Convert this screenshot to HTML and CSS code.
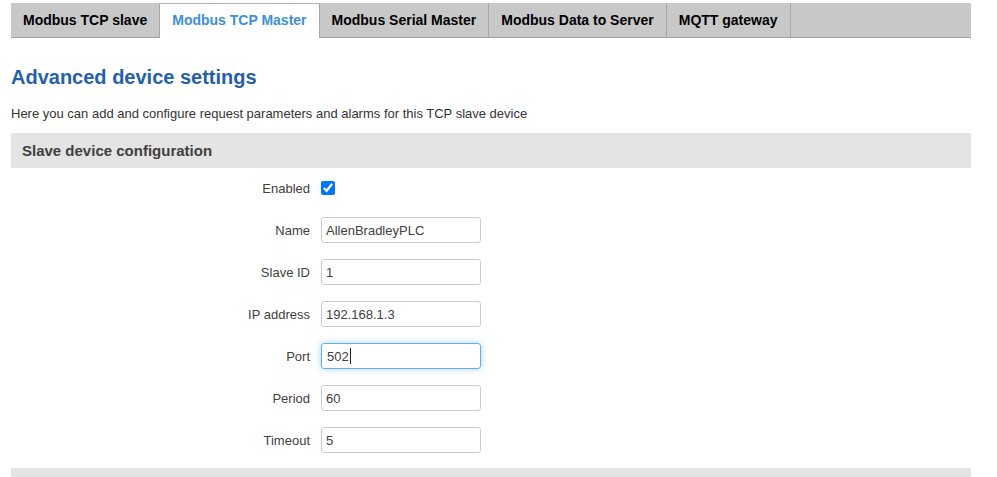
FILE: index.html
```html
<!DOCTYPE html>
<html>
    <head>
        <title>Advanced device settings</title>
        <link rel="stylesheet" href="styles.css">
    </head>
    <body>
        <div class="page">

            <ul class="tabs">
                <li class="tab">Modbus TCP slave</li>
                <li class="tab tab-active">Modbus TCP Master</li>
                <li class="tab">Modbus Serial Master</li>
                <li class="tab">Modbus Data to Server</li>
                <li class="tab">MQTT gateway</li>
            </ul>

            <h2 class="title">Advanced device settings</h2>

            <p class="description">
                Here you can add and configure request parameters and alarms for this TCP slave device
            </p>

            <div class="section">
                <h3 class="section-title">Slave device configuration</h3>

                <div class="form">
                    <div class="row">
                        <label class="label">Enabled</label>
                        <div class="field">
                            <input class="checkbox" type="checkbox" checked>
                        </div>
                    </div>

                    <div class="row">
                        <label class="label">Name</label>
                        <div class="field">
                            <input class="text-input" type="text" value="AllenBradleyPLC">
                        </div>
                    </div>

                    <div class="row">
                        <label class="label">Slave ID</label>
                        <div class="field">
                            <input class="text-input" type="text" value="1">
                        </div>
                    </div>

                    <div class="row">
                        <label class="label">IP address</label>
                        <div class="field">
                            <input class="text-input" type="text" value="192.168.1.3">
                        </div>
                    </div>

                    <div class="row">
                        <label class="label">Port</label>
                        <div class="field">
                            <div class="text-input text-input-focus">502<span class="caret"></span></div>
                        </div>
                    </div>

                    <div class="row">
                        <label class="label">Period</label>
                        <div class="field">
                            <input class="text-input" type="text" value="60">
                        </div>
                    </div>

                    <div class="row">
                        <label class="label">Timeout</label>
                        <div class="field">
                            <input class="text-input" type="text" value="5">
                        </div>
                    </div>
                </div>
            </div>

            <div class="section-bar"></div>

        </div>
    </body>
</html>
```

FILE: styles.css
```css
body {
    margin: 0;
    background: white;
    color: #404040;
    font-family: "Liberation Sans", Arial, sans-serif;
}

.page {
    width: 960px;
    padding: 3px 0 0 11px;
}

.tabs {
    display: flex;
    margin: 0;
    padding: 0;
    list-style: none;
    height: 34px;
    background-color: #c8c8c8;
    border-bottom: 1px solid #a4a4a4;
}

.tab {
    padding: 0 12px;
    line-height: 34px;
    font-size: 14px;
    font-weight: bold;
    color: #000;
    border-right: 1px solid #a8a8a8;
}

.tab-active {
    background-color: white;
    color: #3d8fdb;
    height: 35px;
    box-sizing: border-box;
    line-height: 33px;
    border-top: 1px solid #b4b4b4;
    border-left: 1px solid #a8a8a8;
    margin-left: -1px;
}

.title {
    margin: 26px 0 0 0;
    font-size: 20px;
    line-height: 26px;
    color: #2560a8;
}

.description {
    margin: 16px 0 0 0;
    font-size: 13px;
    line-height: 16px;
    color: #333;
}

.section {
    margin-top: 11px;
}

.section-title {
    margin: 0;
    height: 35px;
    line-height: 35px;
    padding-left: 11px;
    font-size: 15px;
    background-color: #e4e4e4;
    color: #404040;
}

.form {
    padding-top: 7px;
}

.row {
    display: flex;
    align-items: center;
    height: 26px;
    margin-bottom: 16px;
}

.label {
    width: 299px;
    text-align: right;
    font-size: 13px;
    color: #404040;
}

.field {
    margin-left: 11px;
    display: flex;
    align-items: center;
}

.checkbox {
    width: 14px;
    height: 14px;
    margin: 0;
    accent-color: #0075ff;
}

.text-input {
    width: 160px;
    height: 26px;
    box-sizing: border-box;
    padding: 0 4px;
    font-size: 13px;
    font-family: "Liberation Sans", Arial, sans-serif;
    color: #404040;
    border: 1px solid #cccccc;
    border-radius: 3px;
}

.text-input-focus {
    display: flex;
    align-items: center;
    padding-left: 5px;
    border-color: #66afe9;
    box-shadow: 0 0 6px rgba(102, 175, 233, 0.6);
}

.caret {
    width: 1px;
    height: 16px;
    margin-left: 1px;
    background-color: #222;
}

.section-bar {
    margin-top: -1px;
    height: 20px;
    background-color: #e4e4e4;
}
```
